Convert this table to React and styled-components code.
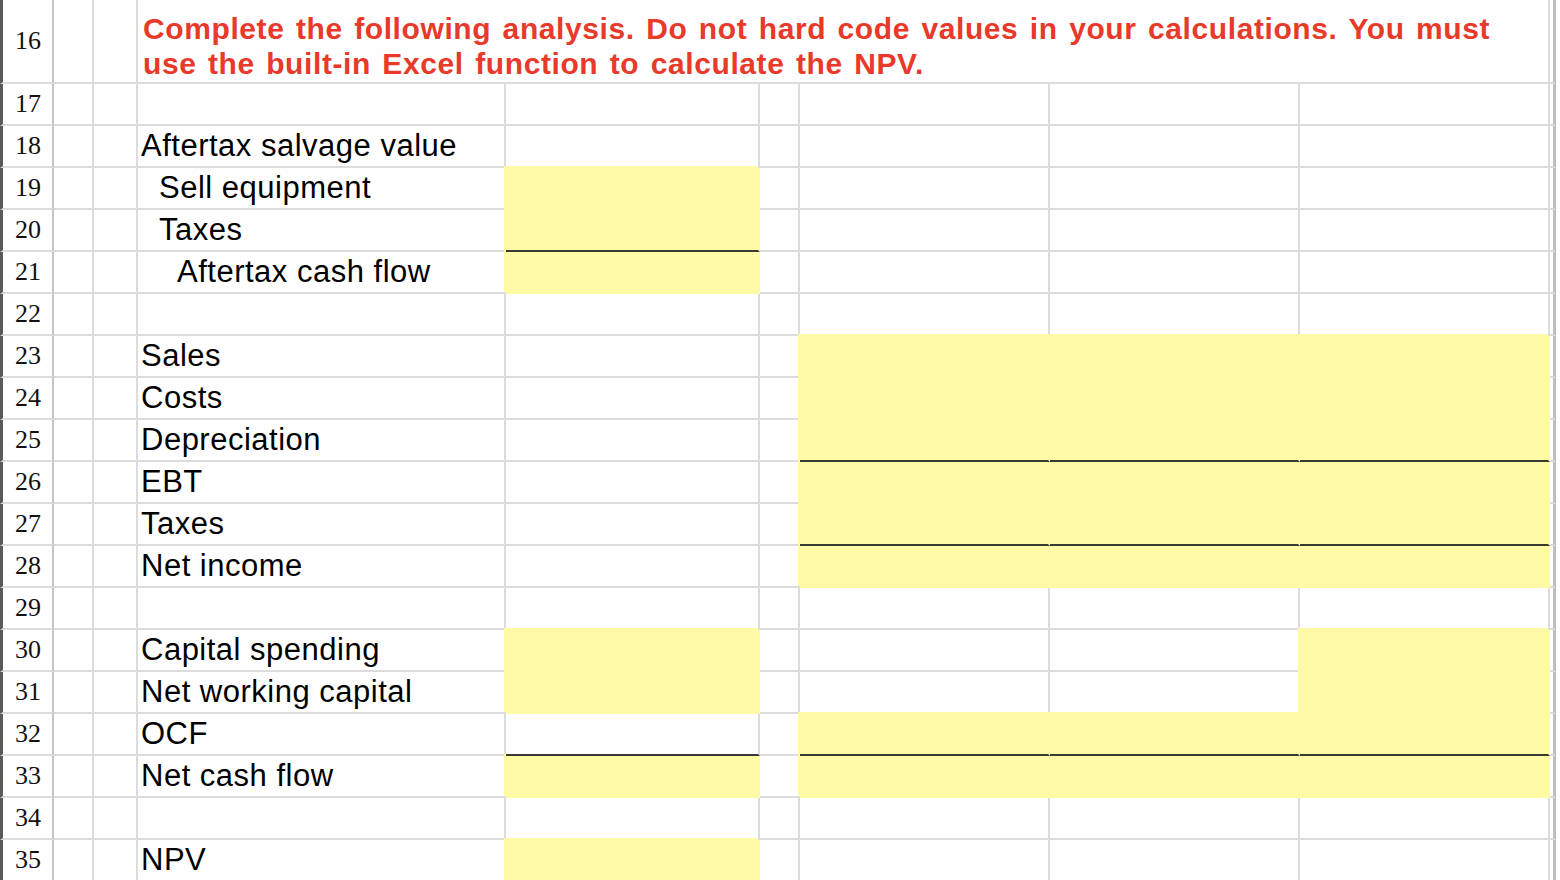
import React from "react";
import styled, { createGlobalStyle, css } from "styled-components";

const YELLOW = "#fffaa6";
const GRID = "#dcdcdc";
const RULE = "#3a3a34";

const GlobalStyle = createGlobalStyle`
  html, body {
    margin: 0;
    padding: 0;
    background: #fff;
    overflow: hidden;
  }
  body {
    width: 1560px;
    height: 880px;
  }
`;

const Sheet = styled.div`
  display: grid;
  grid-template-columns: 54px 40px 44px 368px 254px 40px 250px 250px 250px 6px;
  grid-template-rows: 84px;
  grid-auto-rows: 42px;
  width: 1556px;
  font-family: "Liberation Sans", Arial, sans-serif;
  color: #000;
`;

const Cell = styled.div`
  box-sizing: border-box;
  min-width: 0;
  border-right: 2px solid ${GRID};
  border-bottom: 2px solid ${GRID};
  ${(p) =>
    p.$fill &&
    css`
      position: relative;
      z-index: 1;
      background: ${YELLOW};
      border-color: ${YELLOW};
      box-shadow: -2px -2px 0 0 ${YELLOW};
    `}
  ${(p) =>
    p.$rule &&
    css`
      position: relative;
      z-index: 2;
      border-bottom-color: ${RULE};
    `}
`;

const RowHead = styled.div`
  box-sizing: border-box;
  display: flex;
  align-items: center;
  padding-left: 12px;
  border-left: 3px solid #5a5a5a;
  border-right: 2px solid #c4c4c4;
  border-bottom: 2px solid ${GRID};
  font-family: "Liberation Serif", "Times New Roman", serif;
  font-size: 26px;
  color: #111;
`;

const Label = styled(Cell)`
  display: flex;
  align-items: center;
  padding-left: ${(p) => 3 + (p.$indent || 0) * 18}px;
  font-size: 31px;
  letter-spacing: 0.5px;
  white-space: nowrap;
`;

const Notice = styled(Cell)`
  grid-column: span 6;
  display: flex;
  align-items: center;
  padding: 10px 4px 0 5px;
  font-size: 30px;
  font-weight: 700;
  letter-spacing: 0.6px;
  word-spacing: 2.5px;
  line-height: 35px;
  white-space: nowrap;
  color: #e8392a;
`;

const Edge = styled(Cell)`
  border-right: 3px solid #bdbdbd;
`;

const rows = [
  { n: 17 },
  { n: 18, label: "Aftertax salvage value" },
  { n: 19, label: "Sell equipment", indent: 1, e: "f" },
  { n: 20, label: "Taxes", indent: 1, e: "fr" },
  { n: 21, label: "Aftertax cash flow", indent: 2, e: "f" },
  { n: 22 },
  { n: 23, label: "Sales", years: ["f", "f", "f"] },
  { n: 24, label: "Costs", years: ["f", "f", "f"] },
  { n: 25, label: "Depreciation", years: ["fr", "fr", "fr"] },
  { n: 26, label: "EBT", years: ["f", "f", "f"] },
  { n: 27, label: "Taxes", years: ["fr", "fr", "fr"] },
  { n: 28, label: "Net income", years: ["f", "f", "f"] },
  { n: 29 },
  { n: 30, label: "Capital spending", e: "f", years: ["", "", "f"] },
  { n: 31, label: "Net working capital", e: "f", years: ["", "", "f"] },
  { n: 32, label: "OCF", e: "r", years: ["fr", "fr", "fr"] },
  { n: 33, label: "Net cash flow", e: "f", years: ["f", "f", "f"] },
  { n: 34 },
  { n: 35, label: "NPV", e: "f" },
];

const flags = (code = "") => ({
  $fill: code.includes("f"),
  $rule: code.includes("r"),
});

const Row = ({ n, label, indent, e, years = ["", "", ""] }) => (
  <>
    <RowHead>{n}</RowHead>
    <Cell />
    <Cell />
    <Label $indent={indent}>{label}</Label>
    <Cell {...flags(e)} />
    <Cell />
    {years.map((code, i) => (
      <Cell key={i} {...flags(code)} />
    ))}
    <Edge />
  </>
);

const App = () => (
  <>
    <GlobalStyle />
    <Sheet>
      <RowHead>16</RowHead>
      <Cell />
      <Cell />
      <Notice>
        <div>
          Complete the following analysis. Do not hard code values in your
          calculations. You must
          <br />
          use the built-in Excel function to calculate the NPV.
        </div>
      </Notice>
      <Edge />
      {rows.map((row) => (
        <Row key={row.n} {...row} />
      ))}
    </Sheet>
  </>
);

export default App;
